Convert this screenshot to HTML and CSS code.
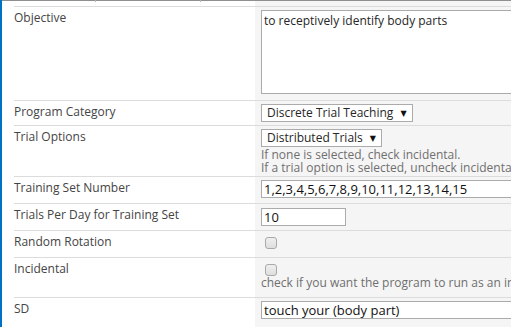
FILE: index.html
```html
<!DOCTYPE html>
<html>
<head>
<meta charset="utf-8">
<link rel="stylesheet" href="styles.css">
</head>
<body>
<div class="page">
  <div class="topline"><span class="tick tick-a"></span><span class="tick tick-b"></span></div>
  <div class="form">
    <div class="row row-stub"><div class="label"></div><div class="value"></div></div>
    <div class="row row-objective">
      <div class="label">Objective</div>
      <div class="value"><div class="textarea">to receptively identify body parts</div></div>
    </div>
    <div class="row row-std">
      <div class="label">Program Category</div>
      <div class="value"><div class="select select-wide">Discrete Trial Teaching <span class="arrow">▼</span></div></div>
    </div>
    <div class="row row-trial">
      <div class="label">Trial Options</div>
      <div class="value">
        <div class="select select-narrow">Distributed Trials <span class="arrow">▼</span></div>
        <div class="help">If none is selected, check incidental.<br>If a trial option is selected, uncheck incidental.</div>
      </div>
    </div>
    <div class="row row-input">
      <div class="label">Training Set Number</div>
      <div class="value"><div class="input input-long">1,2,3,4,5,6,7,8,9,10,11,12,13,14,15</div></div>
    </div>
    <div class="row row-input">
      <div class="label">Trials Per Day for Training Set</div>
      <div class="value"><div class="input input-short">10</div></div>
    </div>
    <div class="row row-check">
      <div class="label">Random Rotation</div>
      <div class="value"><span class="checkbox"></span></div>
    </div>
    <div class="row row-incidental">
      <div class="label">Incidental</div>
      <div class="value"><span class="checkbox"></span><div class="help help-inc">check if you want the program to run as an incidental program</div></div>
    </div>
    <div class="row row-input">
      <div class="label">SD</div>
      <div class="value"><div class="input input-long">touch your (body part)</div></div>
    </div>
    <div class="row row-stub"><div class="label"></div><div class="value"></div></div>
  </div>
</div>
</body>
</html>
```
FILE: styles.css
```css
html, body {
  margin: 0;
  padding: 0;
  background: #ffffff;
  overflow: hidden;
}
body {
  width: 511px;
  height: 327px;
  font-family: "Segoe UI", "Open Sans", "DejaVu Sans", sans-serif;
  font-size: 12px;
  color: #444444;
}
.page {
  border-left: 2px solid #0072c6;
  height: 327px;
  width: 700px;
  box-sizing: border-box;
}
.topline {
  height: 1px;
  background: #8f8f8f;
  position: relative;
}
.tick {
  position: absolute;
  top: 0;
  width: 1px;
  height: 2px;
  background: #b5b5b5;
}
.tick-a { left: 93px; }
.tick-b { left: 198px; }
.form {
  margin-left: 12px;
}
.row {
  display: grid;
  grid-template-columns: 241px 1fr;
  border-top: 1px solid #dcdcdc;
  box-sizing: border-box;
}
.row-stub {
  border-top: none;
  height: 5px;
}
.label {
  background: #ffffff;
  padding-top: 3px;
  line-height: 16px;
  white-space: nowrap;
}
.value {
  background: #f5f5f5;
  padding-left: 6px;
  padding-top: 3px;
  box-sizing: border-box;
  white-space: nowrap;
}
.row-objective { height: 94px; }
.row-std { height: 25px; }
.row-trial { height: 51px; }
.row-input { height: 27px; }
.row-check { height: 27px; }
.row-incidental { height: 40px; }

.textarea {
  width: 400px;
  height: 84px;
  box-sizing: border-box;
  border: 1px solid #ababab;
  background: #ffffff;
  padding: 3px 2px;
  line-height: 14px;
  color: #262626;
}
.select {
  display: inline-flex;
  align-items: center;
  height: 18px;
  box-sizing: border-box;
  border: 1px solid #ababab;
  background: #ffffff;
  padding-left: 5px;
  color: #262626;
  line-height: 16px;
}
.select-wide { width: 152px; }
.select-narrow { width: 121px; }
.arrow {
  font-size: 8px;
  color: #111111;
  margin-left: 7px;
}
.help {
  color: #6f6f6f;
  line-height: 13px;
  margin-top: 1px;
}
.help-inc {
  margin-top: 0;
}
.input {
  height: 18px;
  box-sizing: border-box;
  border: 1px solid #ababab;
  background: #ffffff;
  padding-left: 2px;
  font-size: 13px;
  line-height: 16px;
  color: #111111;
}
.input-long { width: 400px; }
.input-short { width: 85px; margin-top: 1px; }
.checkbox {
  display: block;
  width: 12px;
  height: 12px;
  box-sizing: border-box;
  margin: 3px 0 0 4px;
  border: 1px solid #a9a9a9;
  border-radius: 3px;
  background: linear-gradient(#efefef, #dedede);
}
```
